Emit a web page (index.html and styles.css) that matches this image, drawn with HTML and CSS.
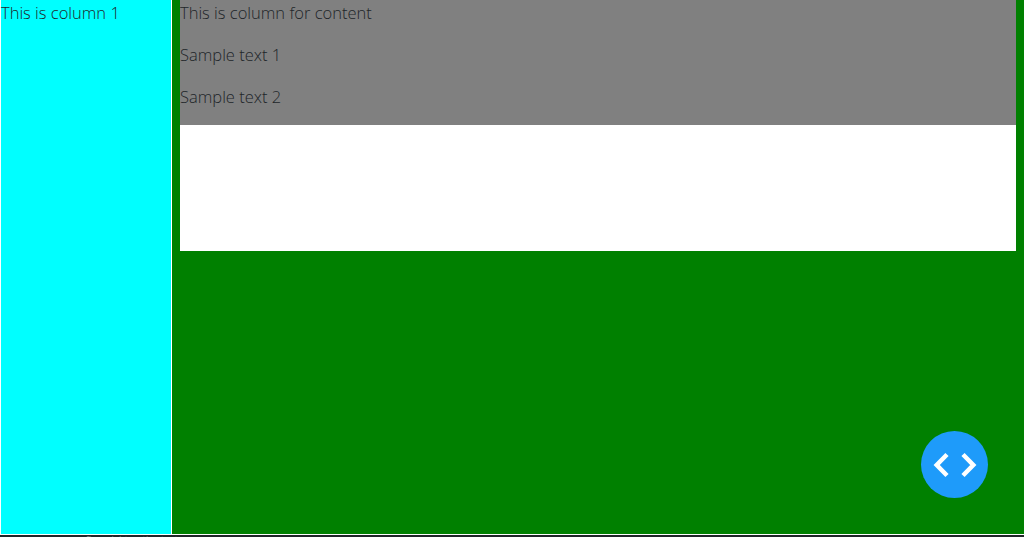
FILE: index.html
```html
<!DOCTYPE html>
<html lang="en">
<head>
  <meta charset="UTF-8">
  <meta name="viewport" content="width=device-width, initial-scale=1.0">
  <title>Columns</title>
  <link rel="stylesheet" href="styles.css">
</head>
<body>
  <div class="layout">
    <div class="col-side">
      <p>This is column 1</p>
    </div>
    <div class="col-main">
      <div class="content">
        <div class="content-text">
          <p>This is column for content</p>
          <p>Sample text 1</p>
          <p>Sample text 2</p>
        </div>
        <div class="content-blank"></div>
      </div>
    </div>
  </div>
  <footer class="footer">
    <span class="footer-text">Copyright notice text</span>
  </footer>
  <button class="code-btn" aria-label="Code">
    <svg viewBox="0 0 44 30" width="44" height="30">
      <path d="M14 4.5 L3.7 15 L14 25.5 M30 4.5 L40.3 15 L30 25.5" fill="none" stroke="#fff" stroke-width="4.5"></path>
    </svg>
  </button>
</body>
</html>
```

FILE: styles.css
```css
html, body {
  height: 100%;
}

body {
  margin: 0;
  font-family: "Open Sans", Arial, sans-serif;
  font-size: 16.5px;
  font-weight: 300;
  color: #212529;
  background: #fff;
  overflow: hidden;
  display: flex;
  flex-direction: column;
}

p {
  margin: 0 0 16px;
  line-height: 26px;
}

.layout {
  height: 534px;
  flex: none;
  display: flex;
  gap: 1px;
  padding-left: 1px;
}

.col-side {
  width: 170px;
  background: #0ff;
}

.col-main {
  flex: 1;
  background: #008000;
  padding: 0 8px;
}

.content-text {
  height: 125px;
  background: #808080;
}

.content-blank {
  height: 126px;
  background: #fff;
}

.footer {
  margin-top: 1px;
  height: 2px;
  flex: none;
  background: #212529;
  overflow: hidden;
  padding-left: 85px;
  font-size: 10px;
  line-height: 10px;
  color: #999;
}

.code-btn {
  position: absolute;
  left: 921px;
  top: 431px;
  width: 67px;
  height: 67px;
  border: none;
  border-radius: 50%;
  background: #1e9bfa;
  padding: 0;
  display: flex;
  align-items: center;
  justify-content: center;
  cursor: pointer;
}
```
